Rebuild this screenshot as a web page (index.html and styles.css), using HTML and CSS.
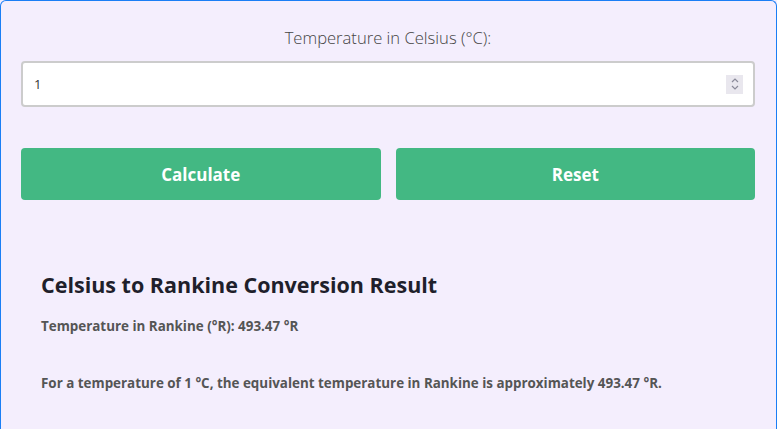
FILE: index.html
```html
<!DOCTYPE html>
<html lang="en">
<head>
    <meta charset="UTF-8">
    <meta name="viewport" content="width=device-width, initial-scale=1.0">
    <title>Celsius to Rankine</title>
    <link rel="stylesheet" href="styles.css">
</head>
<body>

    <div class="calculator">
        <!-- Input -->
        <div class="form-group">
            <label for="celsius">Temperature in Celsius (°C):</label>
            <div class="input-wrap">
                <input type="text" id="celsius" value="1">
                <span class="spinner">
                    <svg width="10" height="14" viewBox="0 0 10 14">
                        <path d="M2 5 L5 2 L8 5" fill="none" stroke="#8a8a99" stroke-width="1.2"/>
                        <path d="M2 9 L5 12 L8 9" fill="none" stroke="#8a8a99" stroke-width="1.2"/>
                    </svg>
                </span>
            </div>
        </div>

        <!-- Buttons -->
        <div class="buttons">
            <button class="btn" id="calcBtn">Calculate</button>
            <button class="btn" id="resetBtn">Reset</button>
        </div>

        <!-- Result -->
        <div class="result">
            <h2>Celsius to Rankine Conversion Result</h2>
            <p class="result-line">Temperature in Rankine (°R): <span id="rankine">493.47</span> °R</p>
            <p class="result-text">For a temperature of <span id="cVal">1</span> °C, the equivalent temperature in Rankine is approximately <span id="rVal">493.47</span> °R.</p>
        </div>
    </div>

</body>
</html>
```

FILE: styles.css
```css
 body {
     margin: 0;
     font-family: "Open Sans", "Noto Sans", sans-serif;
     background: #f4eefd;
     overflow: hidden;
 }
 .calculator {
     border: 1px solid #1a7ef5;
     border-bottom: none;
     border-radius: 6px 6px 0 0;
     background-color: #f4eefd;
     padding: 20px 21px 0 20px;
     height: 408px;
 }
 .form-group {
     padding-top: 6px;
 }
 .form-group label {
     display: block;
     text-align: center;
     font-size: 16.6px;
     font-weight: 300;
     color: #444;
     line-height: 22px;
     margin-bottom: 12px;
 }
 .input-wrap {
     display: flex;
     align-items: center;
     background: white;
     border: 2px solid #cccccc;
     border-radius: 4px;
     height: 42px;
     padding: 0 10px 0 11px;
 }
 .input-wrap input {
     flex: 1;
     border: none;
     outline: none;
     font-family: inherit;
     font-size: 13px;
     color: #333;
     background: transparent;
     padding: 0;
 }
 .spinner {
     display: flex;
     align-items: center;
     justify-content: center;
     width: 17px;
     height: 19px;
     background: #e9e7ee;
 }
 .buttons {
     display: flex;
     gap: 15px;
     margin-top: 41px;
 }
 .btn {
     flex: 1;
     height: 52px;
     border: none;
     border-radius: 4px;
     background-color: #43b883;
     color: white;
     font-family: inherit;
     font-size: 17px;
     font-weight: bold;
     cursor: pointer;
 }
 .result {
     padding: 0 20px;
     margin-top: 70px;
 }
 .result h2 {
     margin: 0;
     font-size: 21.5px;
     color: #1f1f2b;
     line-height: 30px;
 }
 .result-line {
     margin: 17px 0 0;
     font-size: 13.4px;
     font-weight: bold;
     color: #555;
 }
 .result-text {
     margin: 39px 0 0;
     font-size: 13.4px;
     font-weight: bold;
     color: #555;
 }
```
